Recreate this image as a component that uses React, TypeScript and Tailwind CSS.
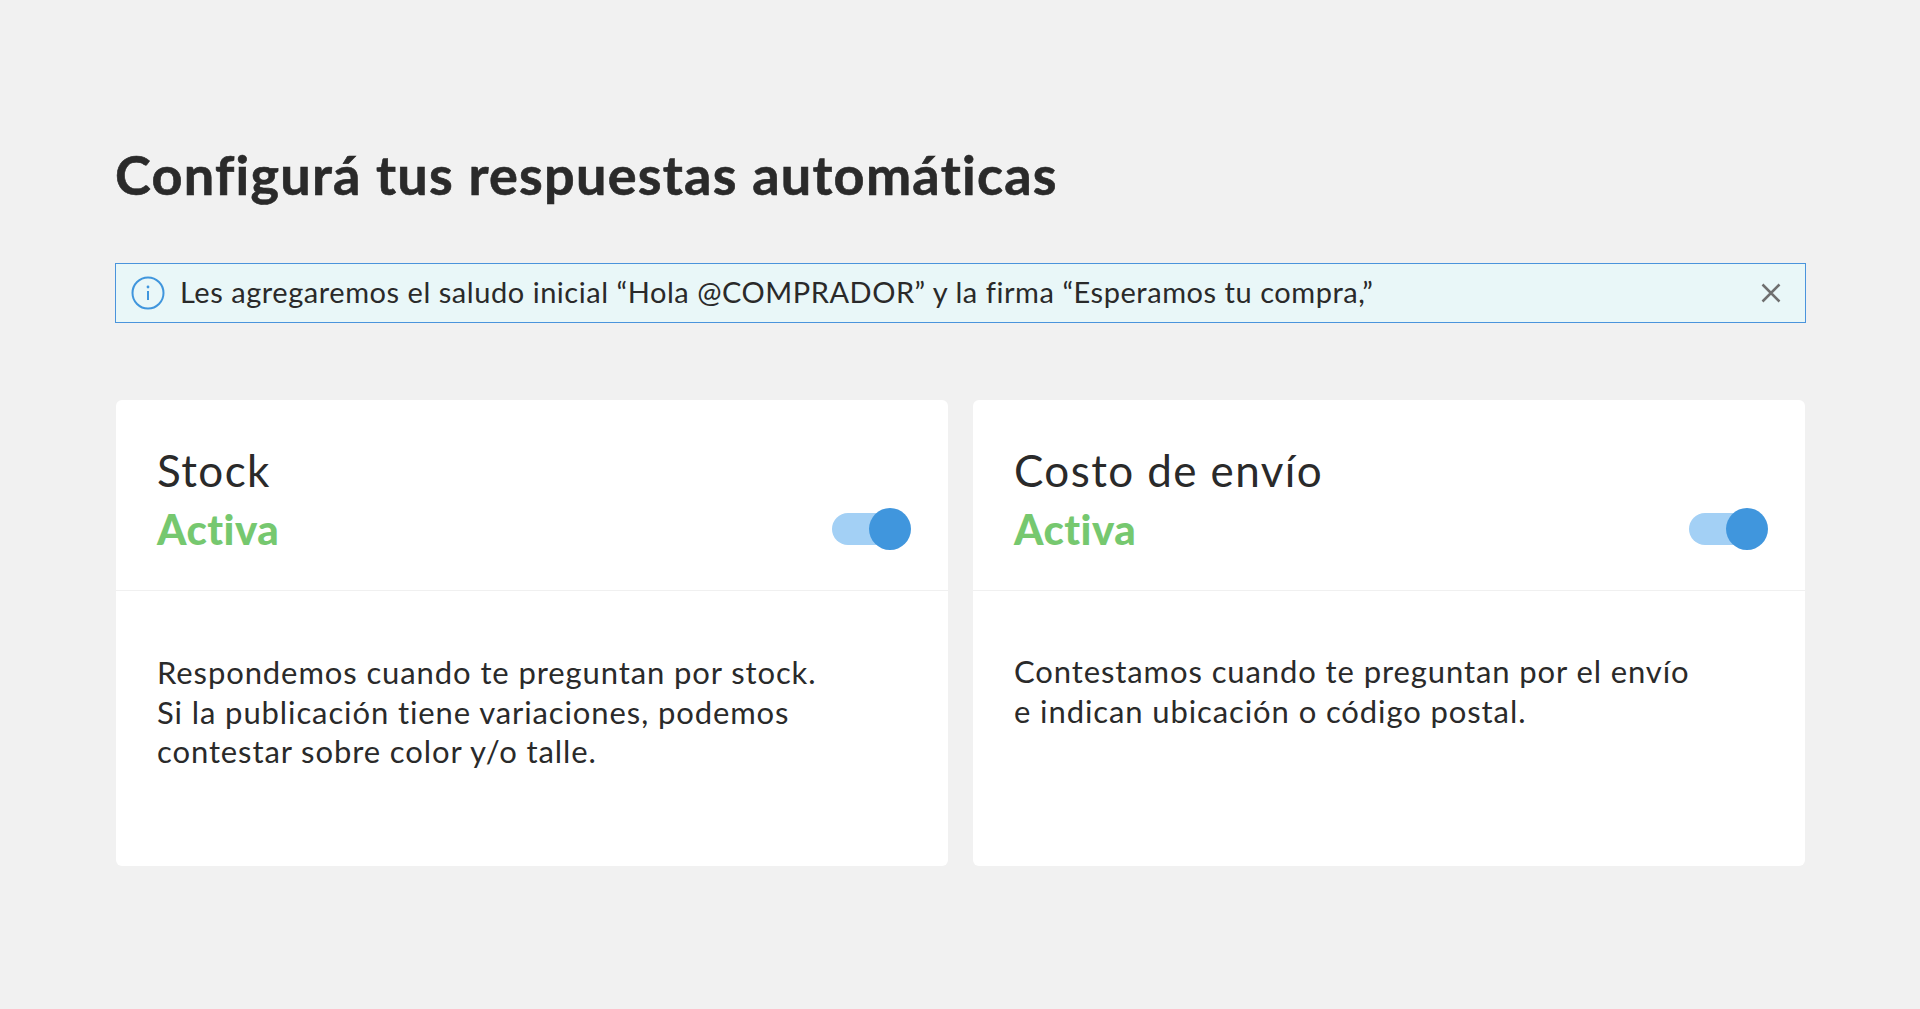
const font = "font-['Lato','Liberation_Sans',sans-serif]";

function Toggle() {
  return (
    <div className="relative h-[32px] w-[71px] self-end mb-[4px] rounded-full bg-[#a3d0f5]">
      <div className="absolute right-[-8px] top-[-5px] h-[42px] w-[42px] rounded-full bg-[#4096dd]" />
    </div>
  );
}

function Card({ title, lines, tight }: { title: string; lines: string[]; tight?: boolean }) {
  return (
    <div className="h-[466px] rounded-[6px] bg-white">
      <div className="flex h-[191px] items-start justify-between border-b border-[#f0f0f0] pl-[41px] pr-[45px] pt-[44px]">
        <div>
          <h2 className="text-[44px] leading-[52px] tracking-[1.4px] text-[#2a2a2a]">{title}</h2>
          <p className="mt-[7px] text-[42px] font-black leading-[52px] tracking-[0.5px] text-[#76c86f]">Activa</p>
        </div>
        <div className="mt-[69px] flex">
          <Toggle />
        </div>
      </div>
      <div className={`pl-[41px] ${tight ? "pt-[61px]" : "pt-[62px]"} text-[31px] leading-[39.5px] tracking-[0.9px] text-[#2a2a2a]`}>
        {lines.map((line) => (
          <p key={line}>{line}</p>
        ))}
      </div>
    </div>
  );
}

export default function App() {
  return (
    <div className={`h-[1009px] overflow-hidden bg-[#f1f1f1] pl-[115px] pr-[114px] pt-[143px] ${font}`}>
      <h1 className="text-[54px] font-bold leading-[64px] tracking-[1.25px] text-[#2a2a2a] [-webkit-text-stroke:0.6px_#2a2a2a]">
        Configurá tus respuestas automáticas
      </h1>

      <div className="mt-[56px] flex h-[60px] items-center justify-between border border-[#4a94dc] bg-[#e9f7f8] pl-[15px] pr-[24px]">
        <div className="flex items-center gap-[15px]">
          <svg width="34" height="34" viewBox="0 0 34 34" fill="none" stroke="#4096dd">
            <circle cx="17" cy="17" r="15.5" strokeWidth="2" />
            <path d="M17 15v9" strokeWidth="2" />
            <circle cx="17" cy="11" r="1.4" fill="#4096dd" stroke="none" />
          </svg>
          <p className="mt-[-2px] text-[29px] leading-[36px] tracking-[0.54px] text-[#2a2a2a]">
            Les agregaremos el saludo inicial “Hola @COMPRADOR” y la firma “Esperamos tu compra,”
          </p>
        </div>
        <svg width="20" height="20" viewBox="0 0 20 20" fill="none" stroke="#6f6f6f" strokeWidth="2.5">
          <path d="M1.5 1.5l17 17M18.5 1.5l-17 17" />
        </svg>
      </div>

      <div className="mt-[77px] mx-[1px] grid grid-cols-2 gap-[25px]">
        <Card
          title="Stock"
          lines={[
            "Respondemos cuando te preguntan por stock.",
            "Si la publicación tiene variaciones, podemos",
            "contestar sobre color y/o talle.",
          ]}
        />
        <Card
          title="Costo de envío"
          tight
          lines={["Contestamos cuando te preguntan por el envío", "e indican ubicación o código postal."]}
        />
      </div>
    </div>
  );
}
